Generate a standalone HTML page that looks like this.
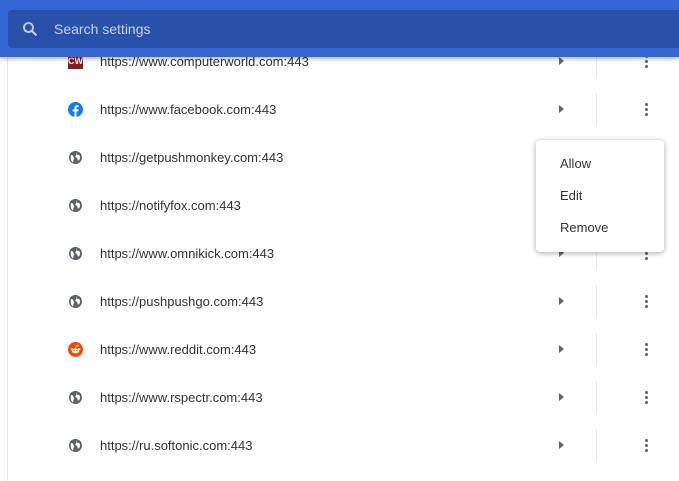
<!DOCTYPE html><html><head><style>
body{margin:0;width:679px;height:481px;overflow:hidden;background:#fff;font-family:"Liberation Sans",sans-serif;position:relative}
.hdr{position:absolute;left:0;top:0;width:679px;height:57px;background:#3367d6;box-shadow:0 2px 4px rgba(0,0,0,.3);z-index:5}
.sb{position:absolute;left:8px;top:10px;width:680px;height:38px;background:#2a51a9;border-radius:4px}
.sb span{position:absolute;left:46px;top:11px;color:#c5d3f1;font-size:14px}
.lb{position:absolute;left:7px;top:0;width:1px;height:481px;background:#e4e4e4}
.row{position:absolute;left:0;width:679px;height:48px}
.row .t{position:absolute;left:100px;top:17px;font-size:13px;color:#333}
.row .ic{position:absolute;left:68px;top:17px;width:15px;height:15px}
.row svg.g{left:69px;top:18px;width:13px;height:13px}
.tri{position:absolute;left:559px;top:20px;width:0;height:0;border-left:5px solid #666;border-top:4px solid transparent;border-bottom:4px solid transparent}
.div{position:absolute;left:596px;top:8px;width:1px;height:32px;background:#e6e6e6}
.dots{position:absolute;left:645px;top:18px;width:3px}
.dots i{display:block;width:3px;height:3px;border-radius:1.5px;background:#5f6368;margin-bottom:2px}
.menu{position:absolute;left:536px;top:140px;width:128px;height:112px;background:#fff;border-radius:4px;box-shadow:0 1px 6px rgba(0,0,0,.35);z-index:3}
.menu div{position:absolute;left:24px;font-size:13px;color:#333}
</style></head><body>
<div class="lb"></div>
<div class="hdr"><div class="sb"><svg style="position:absolute;left:14px;top:11px" width="16" height="16" viewBox="0 0 16 16"><circle cx="6.5" cy="6.5" r="4.5" fill="none" stroke="#c5d3f1" stroke-width="1.8"/><path d="M10 10l4.5 4.5" stroke="#c5d3f1" stroke-width="2"/></svg><span>Search settings</span></div></div>

<div class="row" style="top:37px"><div class="ic" style="background:#8b1a1a;color:#fff;font-size:9px;font-weight:bold;line-height:15px;text-align:center">CW</div><div class="t">https://www.computerworld.com:443</div><div class="tri"></div><div class="div"></div><div class="dots"><i></i><i></i><i></i></div></div>
<div class="row" style="top:85px"><svg class="ic" viewBox="0 0 16 16"><circle cx="8" cy="8" r="8" fill="#1877f2"/><path d="M9 16V10h2l.3-2.2H9V6.5c0-.6.2-1 1-1h1.3V3.6C11 3.5 10.4 3.5 9.8 3.5 8.2 3.5 7 4.5 7 6.2v1.6H5V10h2v6z" fill="#fff"/></svg><div class="t">https://www.facebook.com:443</div><div class="tri"></div><div class="div"></div><div class="dots"><i></i><i></i><i></i></div></div>
<div class="row" style="top:133px"><svg class="ic g" viewBox="0 0 16 16"><circle cx="8" cy="8" r="8" fill="#5f6368"/><path d="M2.5 5c2 0 3 1 3 2s1 1 1 2-1 1-1 3l-.5 2C2.5 12.5 1.5 9 2.5 5zM9 1.5c1 1 0 2 1 3s2 0 3 1c1 2 .5 4.5-1 6.5-1-1-2-2-2-3s-2-1-2-2 1-2 1-3z" fill="#fff"/></svg><div class="t">https://getpushmonkey.com:443</div></div>
<div class="row" style="top:181px"><svg class="ic g" viewBox="0 0 16 16"><circle cx="8" cy="8" r="8" fill="#5f6368"/><path d="M2.5 5c2 0 3 1 3 2s1 1 1 2-1 1-1 3l-.5 2C2.5 12.5 1.5 9 2.5 5zM9 1.5c1 1 0 2 1 3s2 0 3 1c1 2 .5 4.5-1 6.5-1-1-2-2-2-3s-2-1-2-2 1-2 1-3z" fill="#fff"/></svg><div class="t">https://notifyfox.com:443</div></div>
<div class="row" style="top:229px"><svg class="ic g" viewBox="0 0 16 16"><circle cx="8" cy="8" r="8" fill="#5f6368"/><path d="M2.5 5c2 0 3 1 3 2s1 1 1 2-1 1-1 3l-.5 2C2.5 12.5 1.5 9 2.5 5zM9 1.5c1 1 0 2 1 3s2 0 3 1c1 2 .5 4.5-1 6.5-1-1-2-2-2-3s-2-1-2-2 1-2 1-3z" fill="#fff"/></svg><div class="t">https://www.omnikick.com:443</div><div class="tri"></div><div class="div"></div><div class="dots"><i></i><i></i><i></i></div></div>
<div class="row" style="top:277px"><svg class="ic g" viewBox="0 0 16 16"><circle cx="8" cy="8" r="8" fill="#5f6368"/><path d="M2.5 5c2 0 3 1 3 2s1 1 1 2-1 1-1 3l-.5 2C2.5 12.5 1.5 9 2.5 5zM9 1.5c1 1 0 2 1 3s2 0 3 1c1 2 .5 4.5-1 6.5-1-1-2-2-2-3s-2-1-2-2 1-2 1-3z" fill="#fff"/></svg><div class="t">https://pushpushgo.com:443</div><div class="tri"></div><div class="div"></div><div class="dots"><i></i><i></i><i></i></div></div>
<div class="row" style="top:325px"><svg class="ic" viewBox="0 0 16 16"><circle cx="8" cy="8" r="8" fill="#ff4500"/><ellipse cx="8" cy="9.5" rx="4" ry="2.6" fill="#fff"/><circle cx="12" cy="7.5" r="1.1" fill="#fff"/><circle cx="4" cy="7.5" r="1.1" fill="#fff"/><circle cx="10.5" cy="4" r=".9" fill="#fff"/><path d="M8 7l.8-3 1.7.3" stroke="#fff" stroke-width=".6" fill="none"/><circle cx="6.5" cy="9.2" r=".7" fill="#ff4500"/><circle cx="9.5" cy="9.2" r=".7" fill="#ff4500"/></svg><div class="t">https://www.reddit.com:443</div><div class="tri"></div><div class="div"></div><div class="dots"><i></i><i></i><i></i></div></div>
<div class="row" style="top:373px"><svg class="ic g" viewBox="0 0 16 16"><circle cx="8" cy="8" r="8" fill="#5f6368"/><path d="M2.5 5c2 0 3 1 3 2s1 1 1 2-1 1-1 3l-.5 2C2.5 12.5 1.5 9 2.5 5zM9 1.5c1 1 0 2 1 3s2 0 3 1c1 2 .5 4.5-1 6.5-1-1-2-2-2-3s-2-1-2-2 1-2 1-3z" fill="#fff"/></svg><div class="t">https://www.rspectr.com:443</div><div class="tri"></div><div class="div"></div><div class="dots"><i></i><i></i><i></i></div></div>
<div class="row" style="top:421px"><svg class="ic g" viewBox="0 0 16 16"><circle cx="8" cy="8" r="8" fill="#5f6368"/><path d="M2.5 5c2 0 3 1 3 2s1 1 1 2-1 1-1 3l-.5 2C2.5 12.5 1.5 9 2.5 5zM9 1.5c1 1 0 2 1 3s2 0 3 1c1 2 .5 4.5-1 6.5-1-1-2-2-2-3s-2-1-2-2 1-2 1-3z" fill="#fff"/></svg><div class="t">https://ru.softonic.com:443</div><div class="tri"></div><div class="div"></div><div class="dots"><i></i><i></i><i></i></div></div>

<div class="menu"><div style="top:16px">Allow</div><div style="top:48px">Edit</div><div style="top:80px">Remove</div></div>
</body></html>
